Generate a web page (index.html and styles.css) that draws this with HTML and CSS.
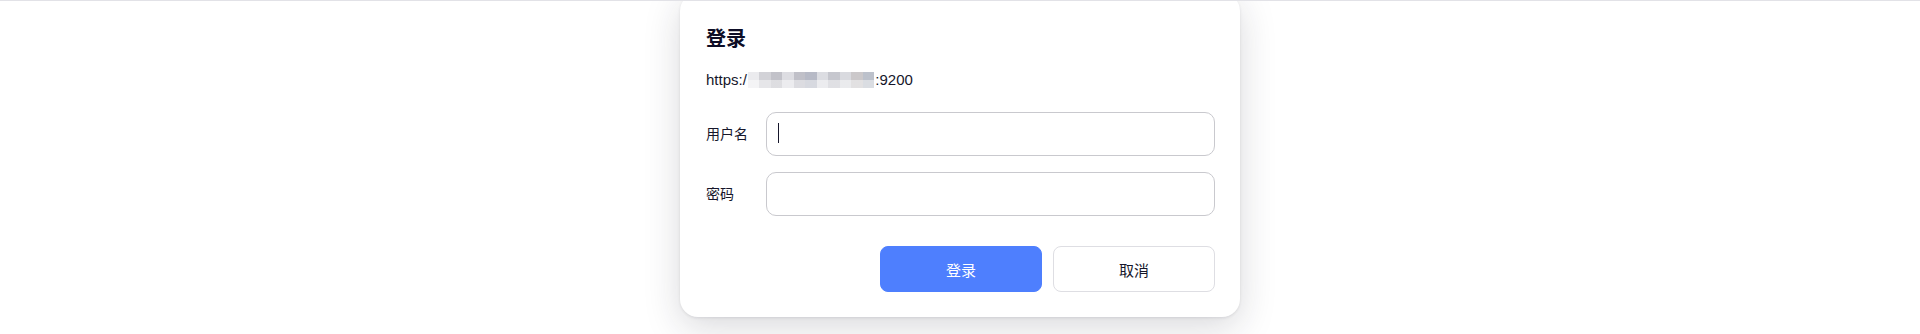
FILE: index.html
```html
<!DOCTYPE html>
<html lang="zh-CN">
<head>
<meta charset="utf-8">
<title>登录</title>
<link rel="stylesheet" href="styles.css">
</head>
<body>
<div class="dialog">
  <h1 class="title">登录</h1>
  <div class="url">
    <span>https:/</span><span class="mosaic"><i class="c1"></i><i class="c2"></i><i class="c3"></i><i class="c4"></i><i class="c5"></i><i class="c6"></i><i class="c7"></i><i class="c8"></i><i class="c9"></i><i class="c10"></i><i class="c11"></i></span><span>:9200</span>
  </div>
  <form class="form">
    <label class="label" for="user">用户名</label>
    <div class="field-wrap">
      <input class="field" id="user" type="text">
      <span class="caret"></span>
    </div>
    <label class="label" for="pass">密码</label>
    <div class="field-wrap">
      <input class="field" id="pass" type="password">
    </div>
    <div class="actions">
      <button type="button" class="btn primary">登录</button>
      <button type="button" class="btn">取消</button>
    </div>
  </form>
</div>
</body>
</html>
```

FILE: styles.css
```css
html, body {
  margin: 0;
  padding: 0;
}
body {
  height: 333px;
  overflow: hidden;
  background: #ffffff;
  border-top: 1px solid #e2e2e7;
  font-family: "Liberation Sans", "Noto Sans CJK SC", sans-serif;
  color: #16162b;
}
.dialog {
  box-sizing: border-box;
  width: 560px;
  margin: -8px auto 0;
  padding: 32px 25px 25px 26px;
  background: #ffffff;
  border-radius: 18px;
  box-shadow: 0 10px 36px rgba(30, 30, 50, 0.17), 0 1px 3px rgba(30, 30, 50, 0.10);
}
.title {
  margin: 0;
  font-size: 20px;
  line-height: 28px;
  font-weight: 700;
  color: #0d0d26;
}
.url {
  margin-top: 16px;
  display: flex;
  align-items: center;
  font-size: 15px;
  line-height: 22px;
  color: #16162b;
}
.mosaic {
  display: flex;
  height: 16px;
  margin: 0 1px 0 1px;
}
.mosaic i {
  display: block;
  width: 11.5px;
  height: 16px;
  background-image: linear-gradient(to bottom, rgba(255,255,255,0) 50%, rgba(255,255,255,0.45) 50%);
}
.mosaic .c1 { background-color: #ebebee; }
.mosaic .c2 { background-color: #d2d2d7; }
.mosaic .c3 { background-color: #c2c2c9; }
.mosaic .c4 { background-color: #dddde2; }
.mosaic .c5 { background-color: #c0c0c8; }
.mosaic .c6 { background-color: #b7bac6; }
.mosaic .c7 { background-color: #dcdde2; }
.mosaic .c8 { background-color: #c6c7ce; }
.mosaic .c9 { background-color: #d9dadf; }
.mosaic .c10 { background-color: #cbc8ca; }
.mosaic .c11 { background-color: #bcc1cb; }
.form {
  margin: 21px 0 0;
  display: grid;
  grid-template-columns: 60px 1fr;
  row-gap: 16px;
  align-items: center;
}
.label {
  font-size: 14px;
  line-height: 20px;
  color: #16162b;
}
.field-wrap {
  position: relative;
  height: 44px;
}
.field {
  box-sizing: border-box;
  width: 449px;
  height: 44px;
  padding: 0 11px;
  border: 1.5px solid #c9c9ce;
  border-radius: 10px;
  background: #ffffff;
  font-size: 15px;
  font-family: inherit;
  color: #16162b;
  outline: none;
}
.caret {
  position: absolute;
  left: 12px;
  top: 11px;
  width: 1px;
  height: 20px;
  background: #16162b;
}
.actions {
  grid-column: 1 / -1;
  margin-top: 14px;
  display: flex;
  justify-content: flex-end;
  gap: 11px;
}
.btn {
  box-sizing: border-box;
  width: 162px;
  height: 46px;
  border: 1px solid #dedee3;
  border-radius: 8px;
  background: #ffffff;
  font-family: inherit;
  font-size: 15px;
  color: #16162b;
  cursor: pointer;
}
.btn.primary {
  background: #4e7ffe;
  border-color: #4e7ffe;
  color: #ffffff;
}
```
